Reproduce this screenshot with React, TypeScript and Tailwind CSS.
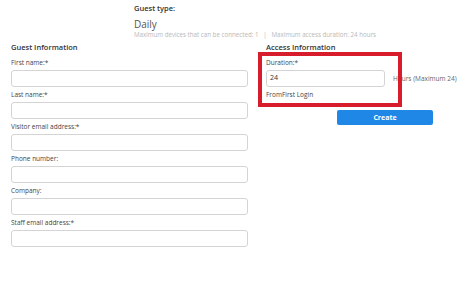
const fields = [
  "First name:*",
  "Last name:*",
  "Visitor email address:*",
  "Phone number:",
  "Company:",
  "Staff email address:*",
];

export default function App() {
  return (
    <div
      className="relative w-[474px] h-[287px] overflow-hidden bg-white text-[#333]"
      style={{ fontFamily: '"Open Sans", "Liberation Sans", sans-serif' }}
    >
      <div className="pl-[134px] pt-[2px]">
        <p className="h-[12px] leading-[12px] text-[7.5px] font-semibold text-[#333]">Guest type:</p>
        <p className="h-[14px] leading-[14px] mt-[3px] text-[10px] text-[#555]">Daily</p>
        <p className="h-[8px] leading-[8px] text-[6.2px] text-[#b8b8b8] whitespace-nowrap">
          Maximum devices that can be connected: 1 &nbsp;&nbsp;|&nbsp;&nbsp; Maximum access duration: 24 hours
        </p>
      </div>

      <div className="flex pl-[11px] mt-[1px]">
        <div className="w-[237px]">
          <p className="h-[15px] leading-[15px] text-[7.5px] font-semibold text-[#333]">Guest Information</p>
          {fields.map((f) => (
            <div key={f}>
              <p className="h-[15px] leading-[15px] text-[6.5px] font-medium text-[#444]">{f}</p>
              <div className="h-[17px] rounded-[3px] border border-[#d4d4d4] bg-white" />
            </div>
          ))}
        </div>

        <div className="ml-[18px]">
          <p className="h-[15px] leading-[15px] text-[7.5px] font-semibold text-[#333]">Access Information</p>
          <p className="h-[15px] leading-[15px] text-[6.5px] font-medium text-[#444]">Duration:*</p>
          <div className="flex items-center">
            <div className="flex items-center w-[119px] h-[17px] rounded-[3px] border border-[#d4d4d4] px-[3px] text-[7px] text-[#333]">
              24
            </div>
            <span className="ml-[8px] text-[6.5px] text-[#666] whitespace-nowrap">Hours (Maximum 24)</span>
          </div>
          <p className="h-[15px] leading-[15px] text-[6.5px] font-medium text-[#444]">FromFirst Login</p>
          <button className="ml-[71px] mt-[5px] w-[96px] h-[15px] rounded-[2px] bg-[#1f88e6] text-white text-[7px] font-bold leading-[15px]">
            Create
          </button>
        </div>
      </div>

      <div className="absolute left-[258px] top-[52px] w-[144px] h-[55px] border-[4px] border-[#d71c2b]" />
    </div>
  );
}
